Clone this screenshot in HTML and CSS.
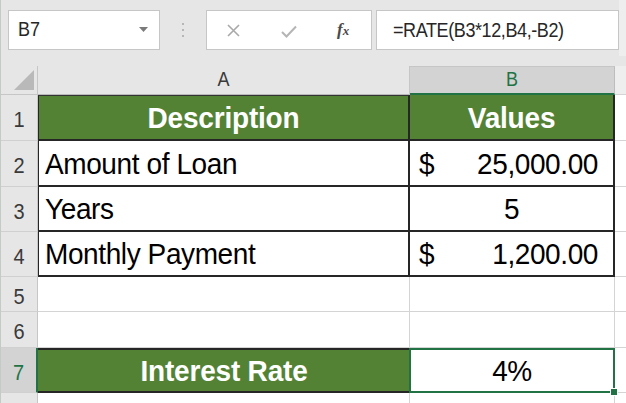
FILE: index.html
```html
<!DOCTYPE html>
<html>
<head>
<meta charset="utf-8">
<link rel="stylesheet" href="styles.css">
</head>
<body>
<div class="app">
  <div class="toolbar">
    <div class="namebox">
      <span class="name">B7</span>
      <svg class="caret" width="9" height="5" viewBox="0 0 9 5"><path d="M0 0H9L4.5 5Z" fill="#7a7a7a"/></svg>
    </div>
    <div class="sep"><span class="dot"></span><span class="dot"></span><span class="dot"></span></div>
    <div class="fxbox">
      <svg class="ico-x" width="13" height="13" viewBox="0 0 13 13"><path d="M1 1L12 12M12 1L1 12" stroke="#a9a9a9" stroke-width="1.6" fill="none"/></svg>
      <svg class="ico-ok" width="16" height="13" viewBox="0 0 16 13"><path d="M1 7L5.5 11.5L15 1.5" stroke="#b5b5b5" stroke-width="2" fill="none"/></svg>
      <span class="fx">f<span class="fxx">x</span></span>
    </div>
    <div class="formula"><span class="ft">=RATE(B3*12,B4,-B2)</span></div>
    <div class="edge"></div>
  </div>
  <div class="sheet">
    <div class="corner"><svg width="20" height="20" viewBox="0 0 20 20"><path d="M20 0V20H0Z" fill="#b9b9b9"/></svg></div>
    <div class="hdr"><span class="ht">A</span></div>
    <div class="hdr hdr-sel"><span class="ht">B</span></div>
    <div class="hdr hdr-c"></div>

    <div class="rh"><span class="rt">1</span></div>
    <div class="c box box-a green bold top"><span class="t">Description</span></div>
    <div class="c box green bold"><span class="t">Values</span></div>
    <div class="c cc"></div>

    <div class="rh"><span class="rt">2</span></div>
    <div class="c box box-a left"><span class="t">Amount of Loan</span></div>
    <div class="c box acct"><span class="t">$</span><span class="t">25,000.00</span></div>
    <div class="c cc"></div>

    <div class="rh"><span class="rt">3</span></div>
    <div class="c box box-a left"><span class="t">Years</span></div>
    <div class="c box"><span class="t">5</span></div>
    <div class="c cc"></div>

    <div class="rh"><span class="rt">4</span></div>
    <div class="c box box-a left"><span class="t">Monthly Payment</span></div>
    <div class="c box acct"><span class="t">$</span><span class="t">1,200.00</span></div>
    <div class="c cc"></div>

    <div class="rh"><span class="rt">5</span></div>
    <div class="c"></div>
    <div class="c"></div>
    <div class="c cc"></div>

    <div class="rh"><span class="rt">6</span></div>
    <div class="c"></div>
    <div class="c"></div>
    <div class="c cc"></div>

    <div class="rh rh-sel"><span class="rt">7</span></div>
    <div class="c rate green bold"><span class="t">Interest Rate</span></div>
    <div class="c selected"><span class="t">4%</span><span class="handle"></span></div>
    <div class="c cc"></div>

    <div class="rh"></div>
    <div class="c"></div>
    <div class="c"></div>
    <div class="c cc"></div>
  </div>
</div>
</body>
</html>
```

FILE: styles.css
```css
* { box-sizing: border-box; }
html, body { margin: 0; padding: 0; }
body {
  width: 626px;
  height: 403px;
  overflow: hidden;
  background: #ffffff;
  font-family: "Liberation Sans", Arial, sans-serif;
}
.app {
  width: 626px;
  height: 403px;
  border-left: 1px solid #c4cbc4;
  background: #e6e6e6;
}
.toolbar {
  height: 66px;
  display: flex;
  align-items: flex-start;
  padding: 10px 0 0 7px;
}
.namebox {
  width: 152px;
  height: 40px;
  background: #fff;
  border: 1px solid #c6c6c6;
  display: flex;
  align-items: center;
  justify-content: space-between;
  padding: 0 11px 0 9px;
  font-size: 18px;
  color: #262626;
}
.name { display: inline-block; transform: scaleY(1.08); }
.caret { margin-top: -2px; }
.sep {
  width: 46px;
  height: 40px;
  display: flex;
  flex-direction: column;
  align-items: center;
  justify-content: center;
  gap: 4px;
}
.dot {
  width: 2px;
  height: 2px;
  background: #a6a6a6;
  border-radius: 1px;
}
.fxbox {
  width: 166px;
  height: 40px;
  background: #fff;
  border: 1px solid #c6c6c6;
  display: flex;
  align-items: center;
  padding-left: 20px;
}
.ico-x { margin-right: 41px; }
.ico-ok { margin-right: 40px; margin-top: 2px; }
.fx {
  font-family: "Liberation Serif", "Times New Roman", serif;
  font-style: italic;
  font-weight: bold;
  font-size: 17px;
  color: #4a4a4a;
}
.fxx { font-size: 13px; }
.formula {
  width: 243px;
  height: 40px;
  margin-left: 4px;
  background: #fff;
  border: 1px solid #c6c6c6;
  display: flex;
  align-items: center;
  padding-left: 16px;
  font-size: 18px;
  letter-spacing: -0.4px;
  color: #262626;
}
.ft { display: inline-block; transform: scaleY(1.1); }
.edge {
  flex: 1;
  height: 56px;
  margin-top: -10px;
  background: #eeeeee;
}
.sheet {
  display: grid;
  grid-template-columns: 37px 372px 205px 11px;
  grid-template-rows: 29px 46px 46px 45px 45px 35px 36px 45px 30px;
  background: #fff;
}
.corner {
  background: #e6e6e6;
  border-right: 1px solid #c6c6c6;
  border-bottom: 1px solid #c6c6c6;
  display: flex;
  align-items: flex-end;
  padding: 0 0 4px 13px;
}
.hdr {
  background: #e6e6e6;
  border-right: 1px solid #c6c6c6;
  border-bottom: 1px solid #b9b9b9;
  display: flex;
  align-items: center;
  justify-content: center;
  font-size: 18px;
  color: #3a3a3a;
  padding-top: 1px;
}
.ht { display: inline-block; transform: scaleY(1.08); }
.hdr-sel {
  background: #d3d3d3;
  color: #217346;
  border-top: 1px solid #c6c6c6;
  border-bottom: 2px solid #217346;
  border-right: 1px solid #bdbdbd;
}
.hdr-c {
  background: #eeeeee;
  border-right: none;
  border-bottom: 1px solid #d4d4d4;
}
.rh {
  background: #e6e6e6;
  border-right: 1px solid #c6c6c6;
  border-bottom: 1px solid #d0d0d0;
  display: flex;
  align-items: center;
  justify-content: center;
  font-size: 20px;
  color: #3a3a3a;
  padding-top: 4px;
}
.rt { display: inline-block; transform: scaleY(1.1); }
.rh-sel {
  background: #d3d3d3;
  color: #217346;
  border-right: 2px solid #217346;
}
.c {
  background: #fff;
  border-right: 1px solid #d4d4d4;
  border-bottom: 1px solid #d4d4d4;
  display: flex;
  align-items: center;
  justify-content: center;
  font-size: 28px;
  letter-spacing: -0.4px;
  color: #000;
  padding-top: 1px;
}
.t { display: inline-block; transform: scaleY(1.08); }
.cc {
  border-right: none;
}
.box {
  border-right: 2px solid #262626;
  border-bottom: 2px solid #262626;
}
.box-a { border-left: 1px solid #262626; }
.top { border-top: 1px solid #333; }
.green {
  background: #548235;
  color: #fff;
}
.bold {
  font-weight: bold;
  letter-spacing: -0.2px;
}
.left {
  justify-content: flex-start;
  padding-left: 6px;
}
.acct {
  justify-content: space-between;
  padding: 1px 15px 0 9px;
}
.rate {
  border-top: 2px solid #262626;
  border-bottom: 2px solid #262626;
  border-right: none;
}
.selected {
  position: relative;
  border: 2px solid #217346;
  margin-left: -1px;
}
.handle {
  position: absolute;
  right: -5px;
  bottom: -5px;
  width: 8px;
  height: 8px;
  background: #217346;
  border: 1px solid #fff;
}
```
